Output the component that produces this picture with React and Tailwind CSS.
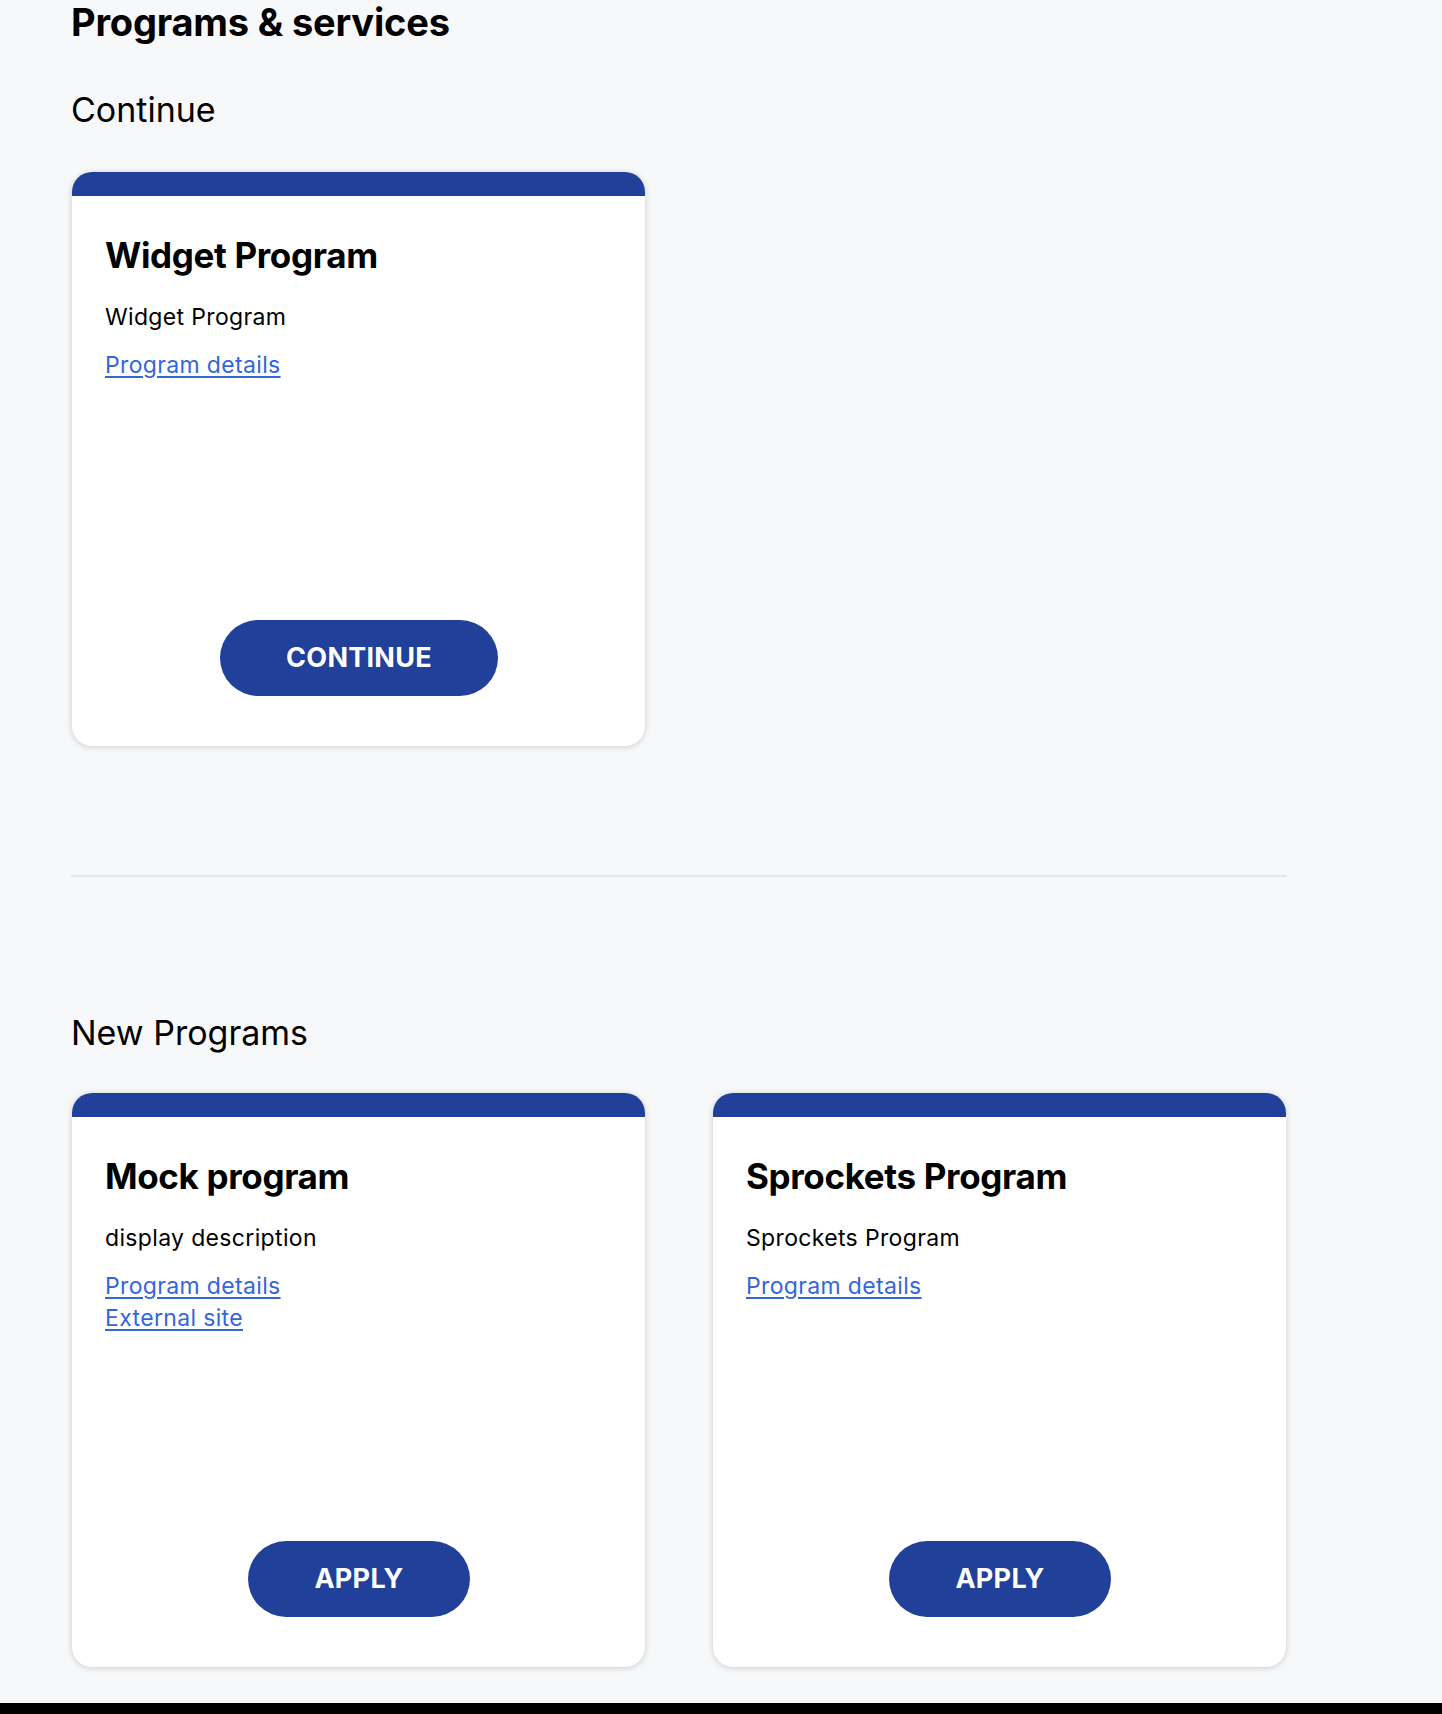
import React from "react";

function Card({ title, description, links, action }) {
  return (
    <div className="flex h-[574px] flex-col overflow-hidden rounded-[20px] bg-white shadow-[0_1px_6px_rgba(0,0,0,0.18)]">
      <div className="h-6 shrink-0 bg-[#21409a]" />
      <div className="flex flex-1 flex-col pl-[33px] pr-8 pt-[38px] pb-[50px]">
        <h3 className="text-[35px] font-bold leading-[43px] tracking-[-0.01em] text-black">{title}</h3>
        <p className="mt-6 text-[23px] leading-8 tracking-[0.015em] text-black">{description}</p>
        <div className="mt-4 flex flex-col items-start">
          {links.map((l) => (
            <a key={l} href="#" className="text-[23px] leading-8 tracking-[0.015em] text-[#3366db] underline underline-offset-[3px]">
              {l}
            </a>
          ))}
        </div>
        <div className="mt-auto flex justify-center">
          <button className="h-[76px] rounded-full bg-[#21409a] px-[66px] text-[27px] font-bold tracking-[0.01em] text-white">
            {action}
          </button>
        </div>
      </div>
    </div>
  );
}

export default function App() {
  return (
    <div className="flex min-h-[1714px] flex-col bg-[#f7f8fa] font-['Inter','Noto_Sans',sans-serif] text-black">
      <main className="ml-[71px] w-[1216px] flex-1">
        <h1 className="text-[38px] font-bold leading-[44px] tracking-[-0.005em]">Programs &amp; services</h1>
        <h2 className="mt-[46px] text-[34px] leading-10">Continue</h2>
        <div className="mx-px mt-[42px] grid grid-cols-2 gap-x-[68px]">
          <Card
            title="Widget Program"
            description="Widget Program"
            links={["Program details"]}
            action="CONTINUE"
          />
        </div>
        <div className="mt-[129px] h-[2px] bg-[#e5e7eb]" />
        <h2 className="mt-[136px] text-[34px] leading-10">New Programs</h2>
        <div className="mx-px mt-10 grid grid-cols-2 gap-x-[68px]">
          <Card
            title="Mock program"
            description="display description"
            links={["Program details", "External site"]}
            action="APPLY"
          />
          <Card
            title="Sprockets Program"
            description="Sprockets Program"
            links={["Program details"]}
            action="APPLY"
          />
        </div>
      </main>
      <footer className="mt-9 h-[11px] shrink-0 bg-black" />
    </div>
  );
}
